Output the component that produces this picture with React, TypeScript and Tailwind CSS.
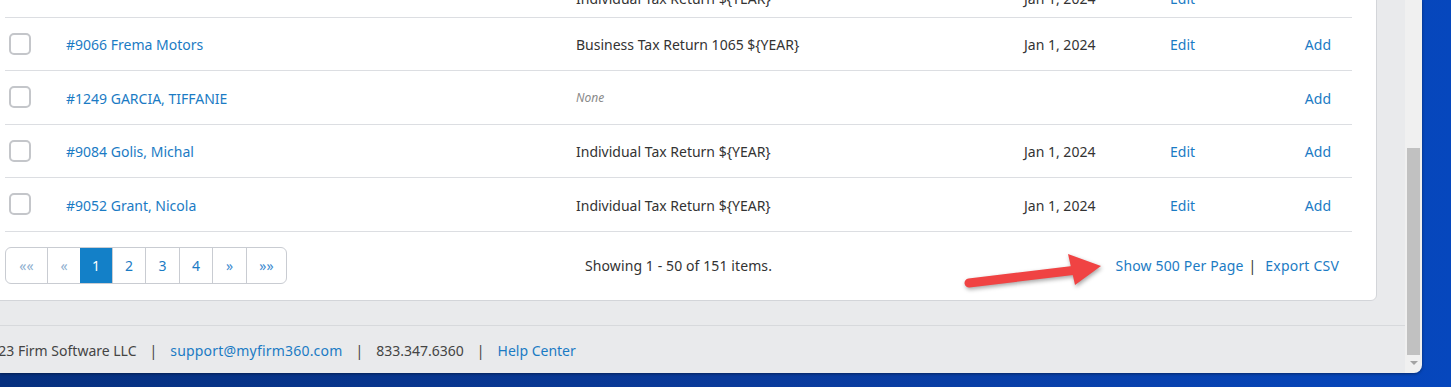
const font = { fontFamily: '"Noto Sans", "Open Sans", sans-serif' };

type Row = { name: string; task: string | null; date: string; edit: boolean };

const rows: Row[] = [
  { name: "", task: "Individual Tax Return ${YEAR}", date: "Jan 1, 2024", edit: true },
  { name: "#9066 Frema Motors", task: "Business Tax Return 1065 ${YEAR}", date: "Jan 1, 2024", edit: true },
  { name: "#1249 GARCIA, TIFFANIE", task: null, date: "", edit: false },
  { name: "#9084 Golis, Michal", task: "Individual Tax Return ${YEAR}", date: "Jan 1, 2024", edit: true },
  { name: "#9052 Grant, Nicola", task: "Individual Tax Return ${YEAR}", date: "Jan 1, 2024", edit: true },
];

const pages = [
  { label: "««", cls: "w-[41px] text-[#8fb0cf] text-[14px] rounded-l-[5px]" },
  { label: "«", cls: "w-[33px] text-[#8fb0cf] text-[14px] border-l border-[#c9ccd2]" },
  { label: "1", cls: "w-[32px] bg-[#1380c8] text-white" },
  { label: "2", cls: "w-[33px] text-[#1b7bc4] border-l border-[#c9ccd2]" },
  { label: "3", cls: "w-[34px] text-[#1b7bc4] border-l border-[#c9ccd2]" },
  { label: "4", cls: "w-[33px] text-[#1b7bc4] border-l border-[#c9ccd2]" },
  { label: "»", cls: "w-[34px] text-[#3d8cd0] text-[14px] border-l border-[#c9ccd2]" },
  { label: "»»", cls: "w-[40px] text-[#3d8cd0] text-[14px] border-l border-[#c9ccd2] rounded-r-[5px]" },
];

export default function App() {
  return (
    <div
      className="relative w-[1451px] h-[387px] overflow-hidden bg-gradient-to-r from-[#06307f] via-[#0a3a9a] to-[#0647bd]"
      style={font}
    >
      <div className="relative flex w-[1422px] h-[373px] rounded-br-[8px] overflow-hidden shadow-[0_1px_3px_rgba(0,0,0,0.4)]">
        {/* page body */}
        <div className="flex flex-col w-[1405px] bg-[#e9eaec] overflow-hidden">
          {/* card */}
          <div className="-ml-[15px] mr-[28px] -mt-[40px] h-[341px] shrink-0 bg-white border border-[#d3d5d9] rounded-b-[6px] pl-[19px] pr-[24px]">
            {rows.map((r, i) => (
              <div
                key={i}
                className={
                  "grid grid-cols-[61px_510px_448px_146px_1fr_100px] items-center h-[53.5px] border-b border-[#dcdee2] text-[14px] " +
                  (i === 0 ? "mt-[3px] pt-[16px]" : "pt-[2px]")
                }
              >
                <div className="pl-[4px] -mt-[2px]">
                  {i > 0 && <div className="w-[22px] h-[22px] rounded-[5px] border-2 border-[#c4c6ca] bg-white" />}
                </div>
                <a className="text-[#1b7bc4]">{r.name}</a>
                {r.task ? (
                  <span className="text-[#333]">{r.task}</span>
                ) : (
                  <span className="text-[#8a8a8a] italic text-[12px]">None</span>
                )}
                <span className="text-[#333]">{r.date}</span>
                <span>{r.edit && <a className="text-[#1b7bc4]">Edit</a>}</span>
                <span className="text-right pr-[21px] text-[#1b7bc4]">{i === 0 ? "" : "Add"}</span>
              </div>
            ))}
            {/* pagination footer */}
            <div className="flex items-center h-[68px] text-[14px]">
              <div className="flex h-[37px] border border-[#c9ccd2] rounded-[6px]">
                {pages.map((p, i) => (
                  <div key={i} className={"flex items-center justify-center h-full " + p.cls}>
                    {p.label}
                  </div>
                ))}
              </div>
              <span className="ml-[298px] text-[#333] tracking-[0.1px]">Showing 1 - 50 of 151 items.</span>
              <div className="ml-auto mr-[13px] flex items-center text-[#1b7bc4]">
                <a className="tracking-[0.15px]">Show 500 Per Page</a>
                <span className="ml-[5px] mr-[9px] text-[#333]">|</span>
                <a className="tracking-[0.2px]">Export CSV</a>
              </div>
            </div>
          </div>
          {/* footer */}
          <div className="mt-[24px] pt-[2px] flex-1 border-t border-[#d7d9dc] flex items-center text-[14px] text-[#444] -ml-[33px]">
            <span>© 2023 Firm Software LLC</span>
            <span className="mx-[13px]">|</span>
            <a className="text-[#1b7bc4] tracking-[0.2px]">support@myfirm360.com</a>
            <span className="mx-[13px]">|</span>
            <span>833.347.6360</span>
            <span className="mx-[13px]">|</span>
            <a className="text-[#1b7bc4]">Help Center</a>
          </div>
        </div>
        {/* scrollbar */}
        <div className="w-[17px] bg-[#f0f0f0] flex flex-col items-center">
          <div className="mt-[148px] w-[13px] h-[207px] bg-[#c1c1c1]" />
          <div className="mt-[6px] w-0 h-0 border-l-[4px] border-r-[4px] border-t-[4px] border-l-transparent border-r-transparent border-t-[#a3a3a3]" />
        </div>
        {/* annotation arrow */}
        <svg
          className="absolute left-[955px] top-[245px] drop-shadow-[1px_2px_2px_rgba(0,0,0,0.35)]"
          width="155"
          height="50"
          viewBox="0 0 155 50"
        >
          <line x1="14" y1="38" x2="122" y2="25" stroke="#f04343" strokeWidth="9" strokeLinecap="round" />
          <polygon points="113,9 146,21 120,40" fill="#f04343" />
        </svg>
      </div>
    </div>
  );
}
